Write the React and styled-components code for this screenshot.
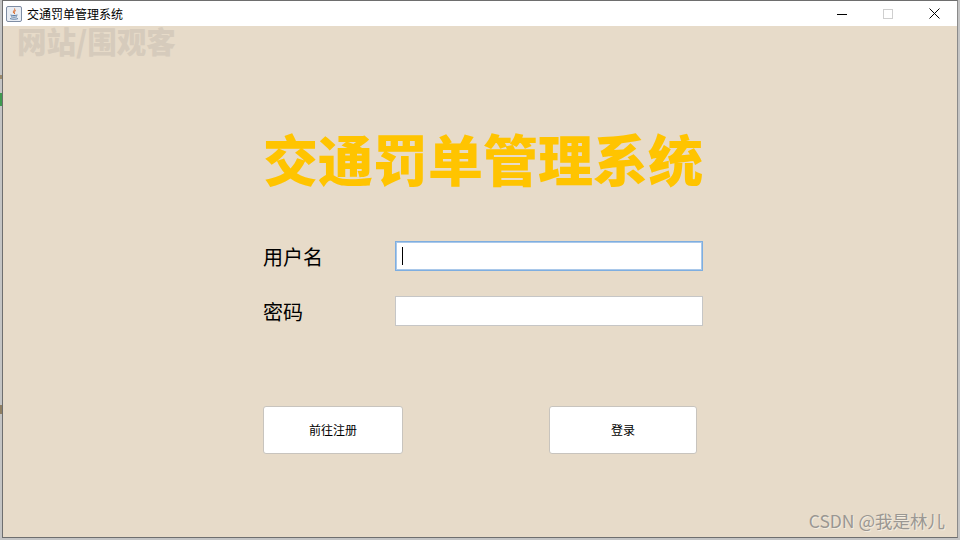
import styled, { createGlobalStyle } from "styled-components";

const GlobalStyle = createGlobalStyle`
  html, body {
    margin: 0;
    padding: 0;
    width: 960px;
    height: 540px;
    overflow: hidden;
    background: #a8a8a8;
    font-family: "Noto Sans CJK SC", "Liberation Sans", sans-serif;
  }
`;

const Desktop = styled.div`
  position: relative;
  width: 960px;
  height: 540px;
  box-sizing: border-box;
  padding: 0 2px 2px 2px;
  background: #c4c4c4;
`;

const EdgeSpeck = styled.div`
  position: absolute;
  left: 0;
  top: ${(p) => p.$top}px;
  width: 2px;
  height: ${(p) => p.$h}px;
  background: ${(p) => p.$color};
`;

const Window = styled.div`
  position: relative;
  height: 100%;
  display: flex;
  flex-direction: column;
  box-sizing: border-box;
  border-top: 1px solid #6e6e6e;
  border-right: 1px solid #8a8a8a;
  border-bottom: 1px solid #6e6e6e;
  border-left: 1px solid #6e6e6e;
  background: #e7dbc9;
`;

const TitleBar = styled.div`
  height: 25px;
  flex: none;
  display: flex;
  align-items: center;
  padding-left: 3px;
  background: #fff;
`;

const AppIcon = styled.svg`
  width: 16px;
  height: 16px;
  flex: none;
`;

const TitleText = styled.span`
  margin-left: 5px;
  font-size: 12px;
  line-height: 16px;
  color: #000;
`;

const WindowControls = styled.div`
  margin-left: auto;
  display: flex;
  align-items: center;
`;

const ControlBtn = styled.div`
  width: 46px;
  height: 25px;
  display: flex;
  align-items: center;
  justify-content: center;
`;

const Content = styled.div`
  flex: 1;
  padding: 0 0 0 260px;
`;

const Heading = styled.h1`
  margin: 99px 0 0 0;
  width: 440px;
  height: 64px;
  font-size: 55px;
  line-height: 64px;
  font-weight: 900;
  white-space: nowrap;
  color: #ffc400;
`;

const FormRow = styled.div`
  display: flex;
  align-items: center;
  width: 440px;
  height: 30px;
  margin-top: ${(p) => p.$top}px;
`;

const Label = styled.label`
  width: 132px;
  flex: none;
  font-size: 20px;
  line-height: 30px;
  padding-top: 1px;
  color: #000;
`;

const FieldBox = styled.div`
  flex: 1;
  height: 30px;
  box-sizing: border-box;
  display: flex;
  align-items: center;
  padding-left: 6px;
  background: #fff;
  border: 1px solid ${(p) => (p.$focused ? "#7eaee0" : "#c6c6c6")};
  box-shadow: ${(p) => (p.$focused ? "inset 0 0 0 1px #a9c8ea" : "none")};
`;

const Caret = styled.div`
  width: 1px;
  height: 18px;
  background: #000;
`;

const ButtonRow = styled.div`
  display: flex;
  width: 434px;
  justify-content: space-between;
  margin-top: 80px;
`;

const ActionButton = styled.button`
  width: ${(p) => p.$w}px;
  height: 48px;
  padding: 0 0 2px 0;
  box-sizing: border-box;
  background: #fff;
  border: 1px solid #c8c4be;
  border-radius: 3px;
  font-family: inherit;
  font-size: 12px;
  color: #000;
`;

const SiteMark = styled.div`
  position: absolute;
  top: 24px;
  left: 14px;
  font-size: 29.5px;
  line-height: 30px;
  font-weight: 900;
  color: #d6cbbc;
  white-space: nowrap;
`;

const CsdnMark = styled.div`
  position: absolute;
  right: 12px;
  bottom: 5px;
  font-size: 17.5px;
  line-height: 22px;
  color: #9a9792;
  white-space: nowrap;
  text-shadow: 1px 1px 0 #f3ece0;
`;

function JavaIcon() {
  return (
    <AppIcon viewBox="0 0 16 16">
      <rect x="0.5" y="0.5" width="15" height="15" rx="1.5" fill="#e9edf3" stroke="#7f8da3" />
      <path d="M8.6 2.5c1 1.6-2.2 2.5-1 4.3.4.6 1 .9 1 .9-1.2-1.4.9-2.4.6-3.7" fill="none" stroke="#d9621e" strokeWidth="1" />
      <path d="M4.5 9c2 .7 5 .7 7 0M5 10.8c1.6.5 4.4.5 6 0M4 12.6c2.4.8 6 .8 8 0" fill="none" stroke="#4a6f9c" strokeWidth="0.9" />
    </AppIcon>
  );
}

export default function App() {
  return (
    <>
      <GlobalStyle />
      <Desktop>
        <EdgeSpeck $top={75} $h={4} $color="#9b8a6c" />
        <EdgeSpeck $top={93} $h={13} $color="#3f9a4f" />
        <EdgeSpeck $top={405} $h={9} $color="#8f7f63" />
        <Window>
          <TitleBar>
            <JavaIcon />
            <TitleText>交通罚单管理系统</TitleText>
            <WindowControls>
              <ControlBtn>
                <svg width="10" height="10" viewBox="0 0 10 10">
                  <path d="M0 5.5h10" stroke="#000" />
                </svg>
              </ControlBtn>
              <ControlBtn>
                <svg width="10" height="10" viewBox="0 0 10 10">
                  <rect x="0.5" y="0.5" width="9" height="9" fill="none" stroke="#cfcfcf" />
                </svg>
              </ControlBtn>
              <ControlBtn>
                <svg width="11" height="11" viewBox="0 0 11 11">
                  <path d="M.5.5l10 10M10.5.5l-10 10" stroke="#000" />
                </svg>
              </ControlBtn>
            </WindowControls>
          </TitleBar>
          <Content>
            <Heading>交通罚单管理系统</Heading>
            <FormRow $top={52}>
              <Label>用户名</Label>
              <FieldBox $focused>
                <Caret />
              </FieldBox>
            </FormRow>
            <FormRow $top={25}>
              <Label>密码</Label>
              <FieldBox />
            </FormRow>
            <ButtonRow>
              <ActionButton $w={140}>前往注册</ActionButton>
              <ActionButton $w={148}>登录</ActionButton>
            </ButtonRow>
          </Content>
          <SiteMark>网站/围观客</SiteMark>
          <CsdnMark>CSDN @我是林儿</CsdnMark>
        </Window>
      </Desktop>
    </>
  );
}
